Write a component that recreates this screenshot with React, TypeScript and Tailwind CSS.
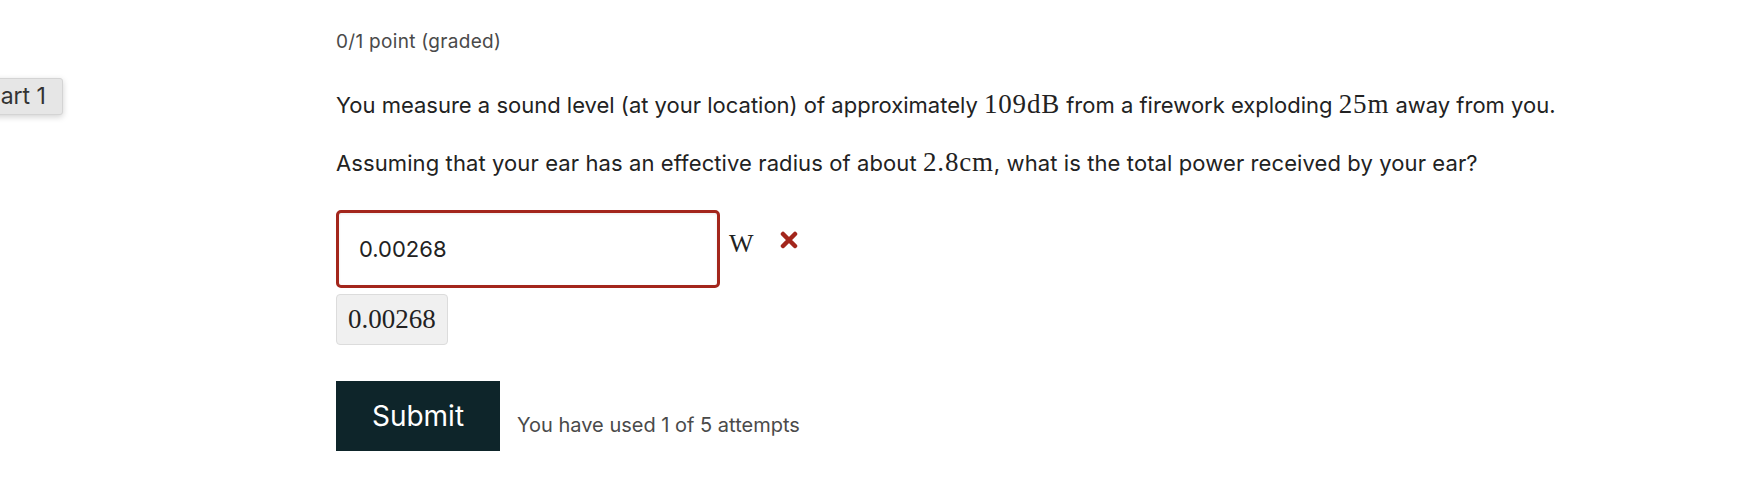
import React from "react";

const sans = { fontFamily: "Inter, 'Noto Sans', sans-serif" } as React.CSSProperties;
const serif = { fontFamily: "'Liberation Serif', 'DejaVu Serif', serif" } as React.CSSProperties;

function M({ children }: { children: React.ReactNode }) {
  return (
    <span className="text-[27px] text-[#222] tracking-[0.8px]" style={serif}>
      {children}
    </span>
  );
}

export default function App() {
  return (
    <div className="relative w-[1740px] h-[480px] bg-white overflow-hidden" style={sans}>
      <div className="absolute left-[-30px] top-[78px] h-[37px] pl-[15px] pr-[16px] flex items-center bg-[#e6e6e6] border border-[#d4d4d4] rounded-[3px] shadow-[0_2px_6px_rgba(0,0,0,0.18)] text-[23px] text-[#333]">
        Part 1
      </div>
      <div className="pl-[336px] pt-[29px] flex flex-col">
        <div className="text-[19px] text-[#4a4a4a] leading-[26px] tracking-[0.3px]">0/1 point (graded)</div>
        <p className="mt-[34px] text-[22px] text-[#222] leading-[30px]">
          You measure a sound level (at your location) of approximately <M>109dB</M> from a firework exploding <M>25m</M> away from you.
        </p>
        <p className="mt-[27px] text-[22px] text-[#222] leading-[30px] tracking-[0.1px]">
          Assuming that your ear has an effective radius of about <M>2.8cm</M>, what is the total power received by your ear?
        </p>
        <div className="mt-[32px] flex items-start">
          <div className="w-[384px] h-[78px] border-[3px] border-[#a3261c] rounded-[5px] flex items-center pl-[20px] text-[22px] text-[#222] shadow-[inset_0_1px_3px_rgba(0,0,0,0.08)]">
            0.00268
          </div>
          <span className="ml-[9px] mt-[14px] text-[26px] text-[#222]" style={serif}>W</span>
          <svg className="ml-[26px] mt-[21px]" width="18" height="18" viewBox="0 0 18 18">
            <path d="M3 3 L15 15 M15 3 L3 15" stroke="#a3261c" strokeWidth="4.5" strokeLinecap="round" />
          </svg>
        </div>
        <div className="mt-[6px] self-start h-[51px] px-[11px] flex items-center bg-[#f0f0f0] border border-[#dcdcdc] rounded-[4px] text-[27px] text-[#222]" style={serif}>
          0.00268
        </div>
        <div className="mt-[36px] flex items-end">
          <button className="w-[164px] h-[70px] bg-[#0e252a] text-white text-[28px]" style={sans}>Submit</button>
          <span className="ml-[17px] mb-[11px] text-[20px] text-[#4a4a4a]">You have used 1 of 5 attempts</span>
        </div>
      </div>
    </div>
  );
}
